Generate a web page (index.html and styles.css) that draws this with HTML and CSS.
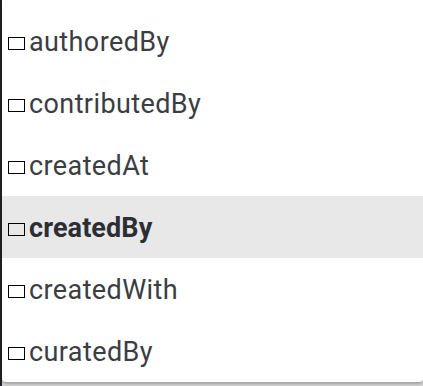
FILE: index.html
```html
<!DOCTYPE html>
<html>
<head>
<meta charset="utf-8">
<link rel="stylesheet" href="styles.css">
</head>
<body>
<div class="frame">
  <ul class="list">
    <li class="item"><span class="box"></span><span class="label">authoredBy</span></li>
    <li class="item"><span class="box"></span><span class="label">contributedBy</span></li>
    <li class="item"><span class="box"></span><span class="label">createdAt</span></li>
    <li class="item active"><span class="box"></span><span class="label">createdBy</span></li>
    <li class="item"><span class="box"></span><span class="label">createdWith</span></li>
    <li class="item"><span class="box"></span><span class="label">curatedBy</span></li>
  </ul>
</div>
</body>
</html>
```
FILE: styles.css
```css
html, body {
  margin: 0;
  padding: 0;
  width: 423px;
  height: 386px;
  overflow: hidden;
  background: #202124;
}
.frame {
  margin-left: 2px;
  height: 386px;
  background: #d6d6d6;
}
.list {
  list-style: none;
  margin: 0;
  padding: 10px 0 0 0;
  background: #ffffff;
  border-radius: 0 0 4px 4px;
  box-shadow: 0 2px 3px rgba(0,0,0,0.25);
}
.item {
  height: 62px;
  display: flex;
  align-items: center;
  padding-left: 6px;
  font-family: Roboto, "Liberation Sans", sans-serif;
  font-size: 27px;
  letter-spacing: 0.4px;
  color: #3a3e43;
}
.item.active {
  background: #e8e8e8;
  font-weight: 700;
  letter-spacing: 0.1px;
  color: #2b2f33;
}
.box {
  display: inline-block;
  flex: none;
  width: 15px;
  height: 11px;
  border: 1px solid #000;
  margin-right: 4px;
  margin-top: 5px;
}
.label {
  line-height: 1;
  padding-top: 3px;
}
```
